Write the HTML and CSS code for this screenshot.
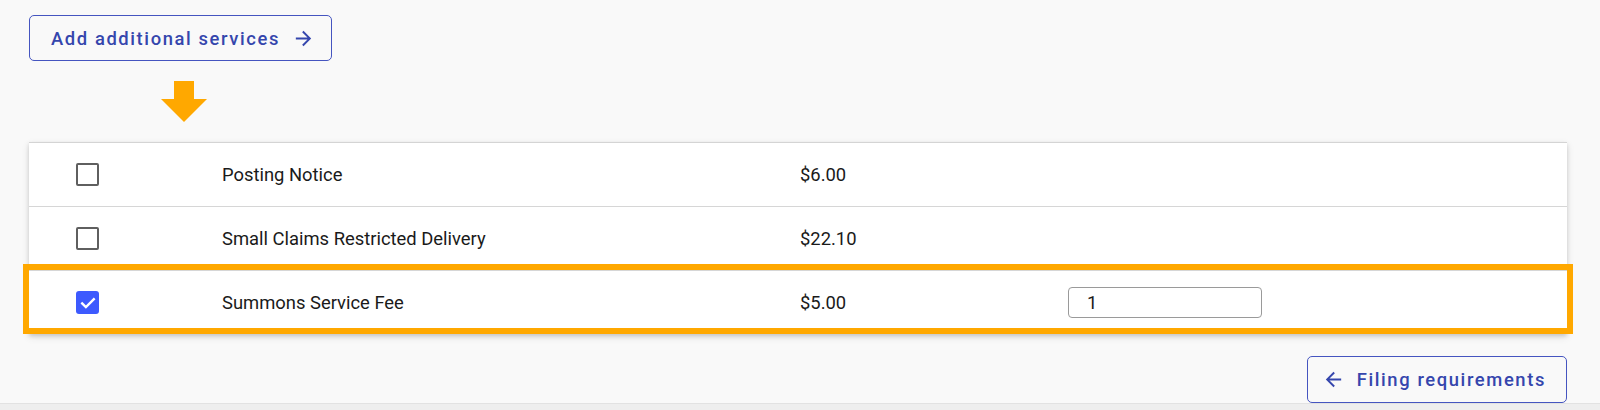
FILE: index.html
```html
<!DOCTYPE html>
<html lang="en">
<head>
<meta charset="utf-8">
<title>Additional services</title>
<link rel="stylesheet" href="styles.css">
</head>
<body>
<div class="page">
  <div class="top-actions">
    <button class="btn-outline btn-forward" type="button">
      <span>Add additional services</span>
      <svg class="btn-icon" viewBox="0 0 24 24" width="23" height="23"><path d="M12 4l-1.41 1.41L16.17 11H4v2h12.17l-5.58 5.59L12 20l8-8z" fill="currentColor"/></svg>
    </button>
  </div>
  <div class="pointer-row">
    <svg class="pointer" viewBox="0 0 46 41" width="46" height="41"><polygon points="13,0 33,0 33,18 46,18 23,41 0,18 13,18" fill="#ffa800"/></svg>
  </div>
  <div class="card">
    <div class="row">
      <span class="check"></span>
      <span class="name">Posting Notice</span>
      <span class="price">$6.00</span>
      <span></span>
    </div>
    <div class="row">
      <span class="check"></span>
      <span class="name">Small Claims Restricted Delivery</span>
      <span class="price">$22.10</span>
      <span></span>
    </div>
    <div class="row row-highlight">
      <span class="check checked">
        <svg viewBox="0 0 24 24" width="20" height="20"><path d="M5 12.5l4.5 4.5L19 7.5" fill="none" stroke="#fff" stroke-width="2.8" stroke-linecap="square"/></svg>
      </span>
      <span class="name">Summons Service Fee</span>
      <span class="price">$5.00</span>
      <span class="qty"><input class="qty-input" type="text" value="1"></span>
    </div>
  </div>
  <div class="bottom-actions">
    <button class="btn-outline btn-back" type="button">
      <svg class="btn-icon" viewBox="0 0 24 24" width="23" height="23"><path d="M20 11H7.83l5.59-5.59L12 4l-8 8 8 8 1.41-1.41L7.83 13H20v-2z" fill="currentColor"/></svg>
      <span>Filing requirements</span>
    </button>
  </div>
</div>
<div class="footer-edge"></div>
</body>
</html>
```

FILE: styles.css
```css
html, body {
  margin: 0;
  padding: 0;
  background: #f9f9f9;
  font-family: Roboto, "Liberation Sans", Arial, sans-serif;
  color: #212121;
  overflow: hidden;
}

.page {
  padding: 15px 33px 0 29px;
  height: 403px;
  box-sizing: border-box;
}

.top-actions {
  display: flex;
}

.btn-outline {
  display: inline-flex;
  align-items: center;
  gap: 12px;
  height: 46px;
  box-sizing: border-box;
  background: transparent;
  border: 1.5px solid #4555c0;
  border-radius: 5px;
  color: #3546ad;
  font-family: Roboto, "Liberation Sans", Arial, sans-serif;
  font-size: 18.4px;
  font-weight: 500;
  letter-spacing: 1.6px;
  cursor: pointer;
}

.btn-forward {
  padding: 0 16px 0 21px;
}

.btn-icon {
  flex: none;
}

.pointer-row {
  display: flex;
  padding: 20px 0 0 132px;
  height: 81px;
  box-sizing: border-box;
}

.card {
  background: #fff;
  border-top: 1px solid #d4d4d4;
  box-shadow: 0 2px 4px rgba(0,0,0,0.14), 0 3px 8px rgba(0,0,0,0.10);
}

.row {
  display: grid;
  grid-template-columns: 146px 578px 268px 194px 1fr;
  align-items: center;
  padding-left: 47px;
  height: 63px;
  border-bottom: 1px solid #d6d6d6;
  font-size: 18.4px;
}

.row:last-child {
  border-bottom: none;
}

.row-highlight {
  position: relative;
}

.row-highlight::after {
  content: "";
  position: absolute;
  left: -6px;
  right: -6px;
  top: -7px;
  bottom: 0;
  border: 6px solid #ffa800;
  pointer-events: none;
}

.check {
  width: 23px;
  height: 23px;
  box-sizing: border-box;
  border: 2.5px solid #5f5f5f;
  border-radius: 2px;
  display: flex;
  align-items: center;
  justify-content: center;
}

.check.checked {
  background: #3d5afe;
  border: none;
  border-radius: 3px;
}

.name, .price {
  color: #1a1a1a;
}

.qty {
  grid-column: 4;
  display: flex;
}

.qty-input {
  width: 194px;
  height: 31px;
  box-sizing: border-box;
  border: 1px solid #9a9a9a;
  border-radius: 4px;
  padding: 0 18px;
  font-family: Roboto, "Liberation Sans", Arial, sans-serif;
  font-size: 18.4px;
  color: #1a1a1a;
  background: #fff;
  outline: none;
}

.bottom-actions {
  display: flex;
  justify-content: flex-end;
  padding-top: 22px;
}

.btn-back {
  height: 47px;
  padding: 0 20px 0 14px;
}

.footer-edge {
  height: 7px;
  background: #eeeeee;
  border-top: 1px solid #e2e2e2;
}
```
